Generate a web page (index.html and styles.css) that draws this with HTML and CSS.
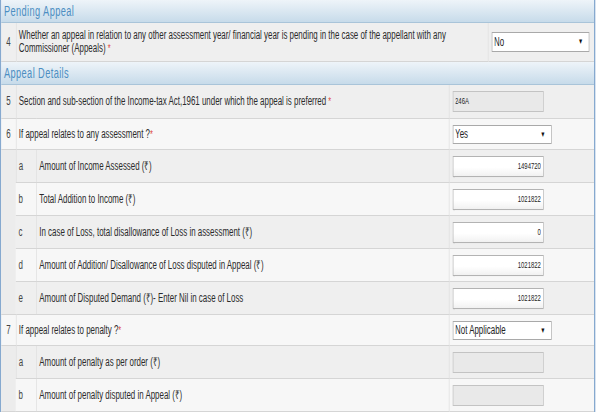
FILE: index.html
```html
<!DOCTYPE html>
<html lang="en">
<head>
  <meta charset="UTF-8">
  <title>Form 35 - Appeal Details</title>
  <link rel="stylesheet" href="styles.css">
</head>
<body>
  <div class="page">
  <div class="form-wrap">
    <div class="section-head">Pending Appeal</div>
    <table class="grid">
      <colgroup><col class="c-num"><col><col class="c-val-wide"></colgroup>
      <tr class="row-tall odd">
        <td class="num">4</td>
        <td class="lbl">Whether an appeal in relation to any other assessment year/ financial year is pending in the case of the appellant with any<br>Commissioner (Appeals) <span class="req">*</span></td>
        <td class="val val-wide">
          <span class="sel sel-no"><select><option>No</option><option>Yes</option></select></span>
        </td>
      </tr>
    </table>

    <div class="section-head">Appeal Details</div>
    <table class="grid">
      <colgroup><col class="c-num"><col class="c-sub"><col><col class="c-val"></colgroup>
      <tr class="row-first odd">
        <td class="num">5</td>
        <td class="lbl" colspan="2">Section and sub-section of the Income-tax Act,1961 under which the appeal is preferred <span class="req">*</span></td>
        <td class="val"><input class="field field-off" type="text" value="246A" disabled></td>
      </tr>
      <tr class="row-sel even">
        <td class="num">6</td>
        <td class="lbl" colspan="2">If appeal relates to any assessment ?<span class="req">*</span></td>
        <td class="val">
          <span class="sel"><select><option>Yes</option><option>No</option></select></span>
        </td>
      </tr>
      <tr class="odd">
        <td class="num num-span" rowspan="5"></td>
        <td class="sub">a</td>
        <td class="lbl">Amount of Income Assessed (₹)</td>
        <td class="val"><input class="field" type="text" value="1494720"></td>
      </tr>
      <tr class="even">
        <td class="sub">b</td>
        <td class="lbl">Total Addition to Income (₹)</td>
        <td class="val"><input class="field" type="text" value="1021822"></td>
      </tr>
      <tr class="odd">
        <td class="sub">c</td>
        <td class="lbl">In case of Loss, total disallowance of Loss in assessment (₹)</td>
        <td class="val"><input class="field" type="text" value="0"></td>
      </tr>
      <tr class="even">
        <td class="sub">d</td>
        <td class="lbl">Amount of Addition/ Disallowance of Loss disputed in Appeal (₹)</td>
        <td class="val"><input class="field" type="text" value="1021822"></td>
      </tr>
      <tr class="odd">
        <td class="sub">e</td>
        <td class="lbl">Amount of Disputed Demand (₹)- Enter Nil in case of Loss</td>
        <td class="val"><input class="field" type="text" value="1021822"></td>
      </tr>
      <tr class="row-sel even">
        <td class="num">7</td>
        <td class="lbl" colspan="2">If appeal relates to penalty ?<span class="req">*</span></td>
        <td class="val">
          <span class="sel"><select><option>Not Applicable</option><option>Yes</option></select></span>
        </td>
      </tr>
      <tr class="odd">
        <td class="num num-span" rowspan="2"></td>
        <td class="sub">a</td>
        <td class="lbl">Amount of penalty as per order (₹)</td>
        <td class="val"><input class="field field-off" type="text" disabled></td>
      </tr>
      <tr class="even">
        <td class="sub">b</td>
        <td class="lbl">Amount of penalty disputed in Appeal (₹)</td>
        <td class="val"><input class="field field-off" type="text" disabled></td>
      </tr>
    </table>
  </div>
  </div>
</body>
</html>
```

FILE: styles.css
```css
body { margin: 0; background: #fff; font-family: "Liberation Sans", Arial, sans-serif; color: #2b2b2b; }
.page { overflow: hidden; }

/* the form is drawn wide and squeezed to fit the narrow frame */
.form-wrap {
  width: 898px;
  border-left: 2px solid #86a9cf;
  border-right: 2px solid #86a9cf;
  transform: scaleX(0.66);
  transform-origin: 0 0;
}

.section-head {
  height: 22px;
  line-height: 22px;
  padding-left: 4px;
  font-size: 14px;
  letter-spacing: 0.6px;
  color: #4c8ec2;
  background: linear-gradient(#eef4f9, #c7dbea);
  border-bottom: 1px solid #a9c4d9;
}

.grid { width: 100%; border-collapse: collapse; table-layout: fixed; font-size: 12px; }
.grid td { padding: 0; vertical-align: middle; border-bottom: 1px solid #d5d5d5; border-left: 1px solid #dcdcdc; }
.grid td:first-child { border-left: none; }
.grid tr { height: 33px; }
.grid tr.row-tall { height: 38px; }
.grid tr.row-first { height: 34px; }
.grid tr.row-sel { height: 31px; }
.odd { background: #efefef; }
.even { background: #f7f7f7; }

.c-num { width: 22px; }
.c-sub { width: 31px; }
.c-val { width: 220px; }
.c-val-wide { width: 161px; }

.num { text-align: center; color: #444; }
.num-span { background: #ececec; }
.sub { padding-left: 4px !important; color: #444; }
.lbl { padding-left: 4px !important; line-height: 13px; color: #2b2b2b; }
.req { color: #e0453d; font-size: 11px; }
.val { padding-left: 5px !important; }

.field {
  box-sizing: border-box;
  width: 138px;
  height: 21px;
  padding: 0 3px;
  border: 1px solid #b3b3b3;
  background: linear-gradient(#fff 55%, #f1f1f1);
  box-shadow: 0 1px 1px rgba(0, 0, 0, 0.06);
  font-family: "Liberation Sans", Arial, sans-serif;
  font-size: 9px;
  color: #222;
  text-align: right;
}
.field-off { background: #e9e9e9; border-color: #c3c3c3; text-align: left; box-shadow: none; }

.sel { position: relative; display: inline-block; }
.sel select {
  appearance: none;
  -webkit-appearance: none;
  box-sizing: border-box;
  width: 150px;
  height: 19px;
  padding: 0 3px;
  border: 1px solid #a9a9a9;
  border-radius: 0;
  background: #fff;
  font-family: "Liberation Sans", Arial, sans-serif;
  font-size: 12px;
  color: #222;
}
.sel::after {
  content: "▼";
  position: absolute;
  right: 9px;
  top: 5px;
  font-size: 8px;
  color: #111;
  pointer-events: none;
}
.sel-no select { width: 148px; height: 20px; }
```
